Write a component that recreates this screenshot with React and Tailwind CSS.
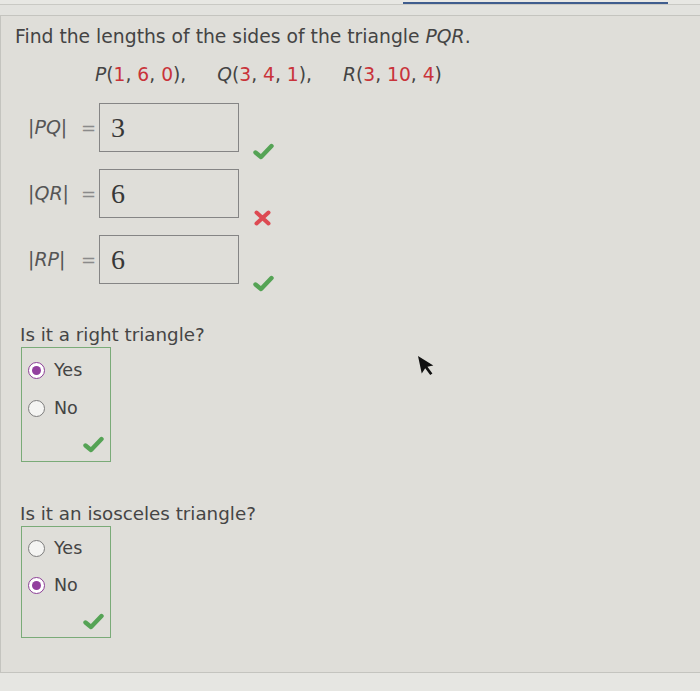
import React from 'react';

const Check = ({ className = '' }) => (
  <svg className={className} width="21" height="17" viewBox="0 0 21 17">
    <path d="M2.5 9.5 L8 14 L18.5 3" fill="none" stroke="#55a355" strokeWidth="4.4" strokeLinecap="round" strokeLinejoin="round" />
  </svg>
);

const Cross = ({ className = '' }) => (
  <svg className={className} width="19" height="18" viewBox="0 0 19 18">
    <path d="M3.5 3.5 L15.5 14.5 M15.5 3.5 L3.5 14.5" fill="none" stroke="#dd4a52" strokeWidth="4" strokeLinecap="round" />
  </svg>
);

const Radio = ({ checked }) =>
  checked ? (
    <span className="w-[17px] h-[17px] rounded-full border-[1.5px] border-[#8c3f96] bg-white flex items-center justify-center shrink-0">
      <span className="w-[9px] h-[9px] rounded-full bg-[#93409f]" />
    </span>
  ) : (
    <span className="w-[17px] h-[17px] rounded-full border-[1.5px] border-[#7d7d7d] bg-[#f4f4f2] shrink-0" />
  );

const LengthRow = ({ a, b, value, ok }) => (
  <div className="flex items-start h-[49px]">
    <div className="w-[53px] ml-[13px] h-[49px] flex items-center text-[#555] text-[19px]">
      |<span className="italic">{a}{b}</span>|
    </div>
    <div className="w-[18px] h-[49px] flex items-center text-[#8a8a8a] text-[18px]">=</div>
    <div className="w-[140px] h-[49px] border-[1.5px] border-[#858585] flex items-center pl-[11px] font-['Liberation_Serif',serif] text-[28px] text-[#383838]">
      {value}
    </div>
    <div className="ml-[14px] mt-[40px]">{ok ? <Check /> : <Cross />}</div>
  </div>
);

const Choice = ({ question, selected, boxH, firstTop, step, checkTop }) => (
  <div>
    <div className="ml-[5px] h-[24px] leading-[24px] text-[18.3px] text-[#454545]">{question}</div>
    <div className="ml-[6px] w-[90px] border-[1.5px] border-[#7aab78] relative" style={{ height: boxH }}>
      <div className="flex flex-col pl-[6px]" style={{ paddingTop: firstTop - 10 }}>
        {['Yes', 'No'].map((opt, i) => (
          <div key={opt} className="flex items-center h-[20px] gap-[9px] text-[17.5px] text-[#444]" style={{ marginTop: i ? step - 20 : 0 }}>
            <Radio checked={selected === opt} />
            <span>{opt}</span>
          </div>
        ))}
      </div>
      <div className="absolute left-[61px]" style={{ top: checkTop }}>
        <Check />
      </div>
    </div>
  </div>
);

const App = () => {
  return (
    <div className="w-[700px] h-[691px] bg-[#e4e4e0] relative overflow-hidden font-['DejaVu_Sans',sans-serif]">
      {/* top strip */}
      <div className="h-[5px] border-b border-[#c9c9c4] bg-[#e7e7e3] flex">
        <div className="ml-[403px] w-[265px] h-[4px] border-b-2 border-[#3f5d8e] bg-[#e9e9e6]" />
      </div>
      <div className="h-[10px] bg-[#e2e2de]" />

      {/* question panel */}
      <div className="h-[658px] border-t border-l border-b border-[#c4c4bf] bg-[#dfded9] pl-[14px]">
        <div className="mt-[9px] h-[24px] leading-[24px] text-[18.75px] text-[#444]">
          Find the lengths of the sides of the triangle <span className="italic">PQR</span>.
        </div>
        <div className="mt-[14px] ml-[80px] h-[24px] leading-[24px] text-[18.7px] text-[#444] flex gap-[31px]">
          <span><span className="italic">P</span>(<span className="text-[#c9333a]">1</span>, <span className="text-[#c9333a]">6</span>, <span className="text-[#c9333a]">0</span>),</span>
          <span><span className="italic">Q</span>(<span className="text-[#c9333a]">3</span>, <span className="text-[#c9333a]">4</span>, <span className="text-[#c9333a]">1</span>),</span>
          <span><span className="italic">R</span>(<span className="text-[#c9333a]">3</span>, <span className="text-[#c9333a]">10</span>, <span className="text-[#c9333a]">4</span>)</span>
        </div>

        <div className="mt-[16px] flex flex-col gap-[17px]">
          <LengthRow a="P" b="Q" value="3" ok />
          <LengthRow a="Q" b="R" value="6" ok={false} />
          <LengthRow a="R" b="P" value="6" ok />
        </div>

        <div className="mt-[39px]">
          <Choice question="Is it a right triangle?" selected="Yes" boxH={115} firstTop={22} step={38} checkTop={88} />
        </div>
        <div className="mt-[40px]">
          <Choice question="Is it an isosceles triangle?" selected="No" boxH={112} firstTop={21} step={37} checkTop={86} />
        </div>
      </div>
      <div className="h-[18px] bg-[#e6e6e2]" />

      {/* mouse pointer */}
      <svg className="absolute left-[415px] top-[354px]" width="20" height="26" viewBox="0 0 20 26">
        <path d="M3 2 L3 20 L7.5 15.5 L11 23 L13.5 22 L10 14.5 L16 14.5 Z" fill="#111" transform="rotate(-12 3 2)" />
      </svg>
    </div>
  );
};

export default App;
